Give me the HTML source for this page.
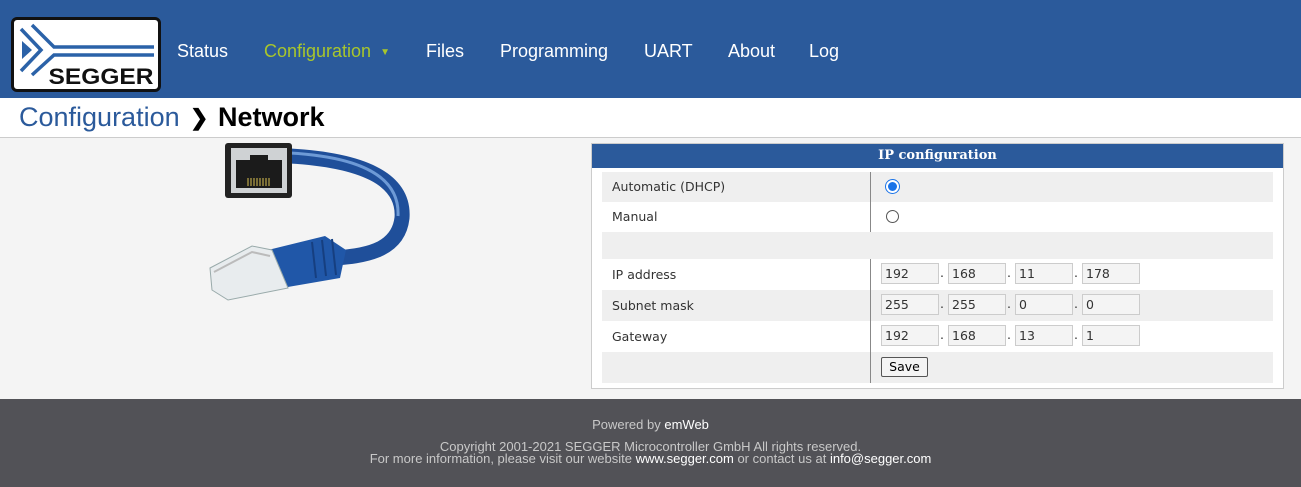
<!DOCTYPE html>
<html><head><meta charset="utf-8"><style>
*{margin:0;padding:0;box-sizing:border-box}
body{width:1301px;height:487px;overflow:hidden;font-family:"Liberation Sans",Arial,sans-serif;background:#f4f4f4;position:relative}
.hdr{position:absolute;left:0;top:0;width:1301px;height:98px;background:#2b5a9b}
.logo{position:absolute;left:11px;top:17px;width:150px;height:75px;background:#fff;border:3px solid #111;border-radius:6px}
.nav{position:absolute;top:41px;font-size:18px;color:#fff}
.crumb{position:absolute;left:0;top:98px;width:1301px;height:40px;background:#fff;border-bottom:1px solid #ccc}
.crumb span{position:absolute;top:4px;font-size:27px}
.panel{position:absolute;left:591px;top:143px;width:693px;height:246px;border:1px solid #ccc;background:#fff}
.ph{height:24px;background:#2b5a9b;color:#fff;text-align:center;font:bold 13px "DejaVu Serif","Liberation Serif",serif;line-height:24px}
.row{position:absolute;left:10px;width:671px;font:12.5px "DejaVu Sans",sans-serif;color:#333}
.row .l{position:absolute;left:10px}
.g{background:#efefef}
.div{position:absolute;left:268px;top:0;bottom:0;width:1px;background:#888}
.ip{position:absolute;top:4px;height:21px;width:58px;background:#f4f4f4;border:1px solid #ccc;font:12.5px "DejaVu Sans",sans-serif;color:#333;padding-left:3px;line-height:19px}
.dot{position:absolute;top:6px}
.radio{position:absolute;left:284px;top:8px;width:13px;height:13px;border-radius:50%;border:1px solid #555;background:#fff}
.foot{position:absolute;left:0;top:399px;width:1301px;height:88px;background:#525257;color:#c8c8c8;font-size:13px;text-align:center}
.foot b{font-weight:normal;color:#fff}
</style></head><body>
<div class="hdr">
 <div class="logo">
  <svg width="144" height="69" viewBox="0 0 144 69">
   <g fill="none" stroke="#2b62a8" stroke-width="3.5">
    <path d="M7 9 L27 30 L7 51"/><path d="M18 5 L40 27 L140 27"/><path d="M18 55 L40 35 L140 35"/>
   </g>
   <path d="M8 21 L18 30 L8 39Z" fill="#2b62a8"/>
   <text x="87" y="64" text-anchor="middle" font-family="Liberation Sans" font-weight="bold" font-size="22" fill="#111" textLength="105" lengthAdjust="spacingAndGlyphs">SEGGER</text>
  </svg>
 </div>
 <div class="nav" style="left:177px">Status</div>
 <div class="nav" style="left:264px;color:#a8c62c">Configuration <span style="font-size:10px;margin-left:4px;vertical-align:2px">▼</span></div>
 <div class="nav" style="left:426px">Files</div>
 <div class="nav" style="left:500px">Programming</div>
 <div class="nav" style="left:644px">UART</div>
 <div class="nav" style="left:728px">About</div>
 <div class="nav" style="left:809px">Log</div>
</div>
<div class="crumb"><span style="left:19px;color:#2b5a9b">Configuration</span><span style="left:190px;font-weight:bold;font-size:22px;top:7px">❯</span><span style="left:218px;font-weight:bold">Network</span></div>

<svg style="position:absolute;left:190px;top:138px" width="230" height="180" viewBox="0 0 230 180">
 <path d="M100 18 C170 22 215 40 212 80 C208 115 170 118 145 120" fill="none" stroke="#1f4f9a" stroke-width="15"/>
 <path d="M100 15 C170 19 210 38 208 78" fill="none" stroke="#6d9ad6" stroke-width="3"/>
 <rect x="35" y="5" width="67" height="55" rx="3" fill="#222"/>
 <rect x="41" y="10" width="56" height="45" fill="#cfd2d4"/>
 <path d="M46 22 L60 22 L60 17 L78 17 L78 22 L92 22 L92 50 L46 50Z" fill="#1b1b1b"/>
 <g stroke="#d8c050" stroke-width="1"><path d="M58 40v8M61 40v8M64 40v8M67 40v8M70 40v8M73 40v8M76 40v8M79 40v8"/></g>
 <path d="M78 112 L135 98 L156 112 L150 140 L92 150Z" fill="#2057a8"/>
 <g stroke="#163f80" stroke-width="2"><path d="M122 104 L126 140M132 102 L136 138M142 101 L146 137"/></g>
 <path d="M20 130 L62 108 L82 112 L98 150 L38 162 L22 152Z" fill="#e8ecee" stroke="#9aa" stroke-width="1"/>
 <path d="M24 134 L62 114 L80 118" fill="none" stroke="#bbb" stroke-width="2"/>
</svg>

<div class="panel">
 <div class="ph">IP configuration</div>
 <div class="row g" style="top:28px;height:30px"><span class="l" style="top:7px">Automatic (DHCP)</span><div class="div"></div><div class="radio" style="border:none;background:#1a73e8;box-shadow:inset 0 0 0 2px #fff, 0 0 0 1px #1a73e8"></div></div>
 <div class="row" style="top:58px;height:30px"><span class="l" style="top:7px">Manual</span><div class="div"></div><div class="radio"></div></div>
 <div class="row g" style="top:88px;height:27px"></div>
 <div class="row" style="top:115px;height:31px"><span class="l" style="top:8px">IP address</span><div class="div"></div>
  <div class="ip" style="left:279px">192</div><span class="dot" style="left:338px">.</span><div class="ip" style="left:346px">168</div><span class="dot" style="left:405px">.</span><div class="ip" style="left:413px">11</div><span class="dot" style="left:472px">.</span><div class="ip" style="left:480px">178</div></div>
 <div class="row g" style="top:146px;height:31px"><span class="l" style="top:8px">Subnet mask</span><div class="div"></div>
  <div class="ip" style="left:279px">255</div><span class="dot" style="left:338px">.</span><div class="ip" style="left:346px">255</div><span class="dot" style="left:405px">.</span><div class="ip" style="left:413px">0</div><span class="dot" style="left:472px">.</span><div class="ip" style="left:480px">0</div></div>
 <div class="row" style="top:177px;height:31px"><span class="l" style="top:8px">Gateway</span><div class="div"></div>
  <div class="ip" style="left:279px">192</div><span class="dot" style="left:338px">.</span><div class="ip" style="left:346px">168</div><span class="dot" style="left:405px">.</span><div class="ip" style="left:413px">13</div><span class="dot" style="left:472px">.</span><div class="ip" style="left:480px">1</div></div>
 <div class="row g" style="top:208px;height:31px"><div class="div"></div>
  <div style="position:absolute;left:279px;top:5px;width:47px;height:20px;border:1px solid #555;border-radius:2px;background:#f4f4f4;font:12.5px 'DejaVu Sans',sans-serif;color:#000;text-align:center;line-height:18px">Save</div></div>
</div>

<div class="foot">
 <div style="position:absolute;top:18px;width:100%">Powered by <b>emWeb</b></div>
 <div style="position:absolute;top:42px;width:100%;line-height:12px">Copyright 2001-2021 SEGGER Microcontroller GmbH All rights reserved.<br>For more information, please visit our website <b>www.segger.com</b> or contact us at <b>info@segger.com</b></div>
</div>
</body></html>
